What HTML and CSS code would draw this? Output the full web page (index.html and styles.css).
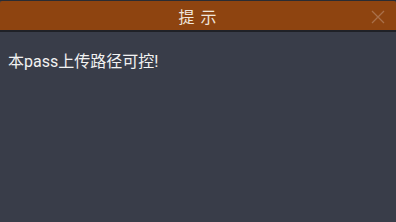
FILE: index.html
```html
<!DOCTYPE html>
<html lang="zh-CN">

<head>
    <meta charset="UTF-8">
    <meta name="viewport" content="width=device-width, initial-scale=1.0">
    <title>提示</title>

    <link rel="stylesheet" href="styles.css">
</head>

<body>
    <div class="layer">
        <div class="layer-title">
            <span class="title-text">提 示</span>
            <span class="layer-close">
                <svg width="14" height="14" viewBox="0 0 14 14">
                    <path d="M1 1 L13 13 M13 1 L1 13" stroke="#a9704a" stroke-width="1.3" fill="none"/>
                </svg>
            </span>
        </div>
        <div class="layer-content">本pass上传路径可控!</div>
    </div>
</body>

</html>
```

FILE: styles.css
```css
* {
    box-sizing: border-box;
}

body {
    margin: 0;
    background-color: #393d49;
    font-family: "Roboto", "Noto Sans CJK SC", sans-serif;
}

.layer {
    width: 396px;
    height: 222px;
    background-color: #393d49;
    border-top: 1px solid #2a2c33;
}

.layer-title {
    height: 31px;
    background-color: #8e4410;
    border-bottom: 2px solid #1f2127;
    border-top-left-radius: 2px;
    border-top-right-radius: 2px;
    display: flex;
    justify-content: center;
    align-items: center;
    position: relative;
}

.title-text {
    color: #efe6dc;
    font-size: 16px;
    letter-spacing: 1px;
}

.layer-close {
    position: absolute;
    right: 11px;
    top: 9px;
    width: 14px;
    height: 14px;
    display: flex;
}

.layer-content {
    padding: 18px 8px;
    color: #f2f2f2;
    font-size: 16px;
    line-height: 24px;
}
```
